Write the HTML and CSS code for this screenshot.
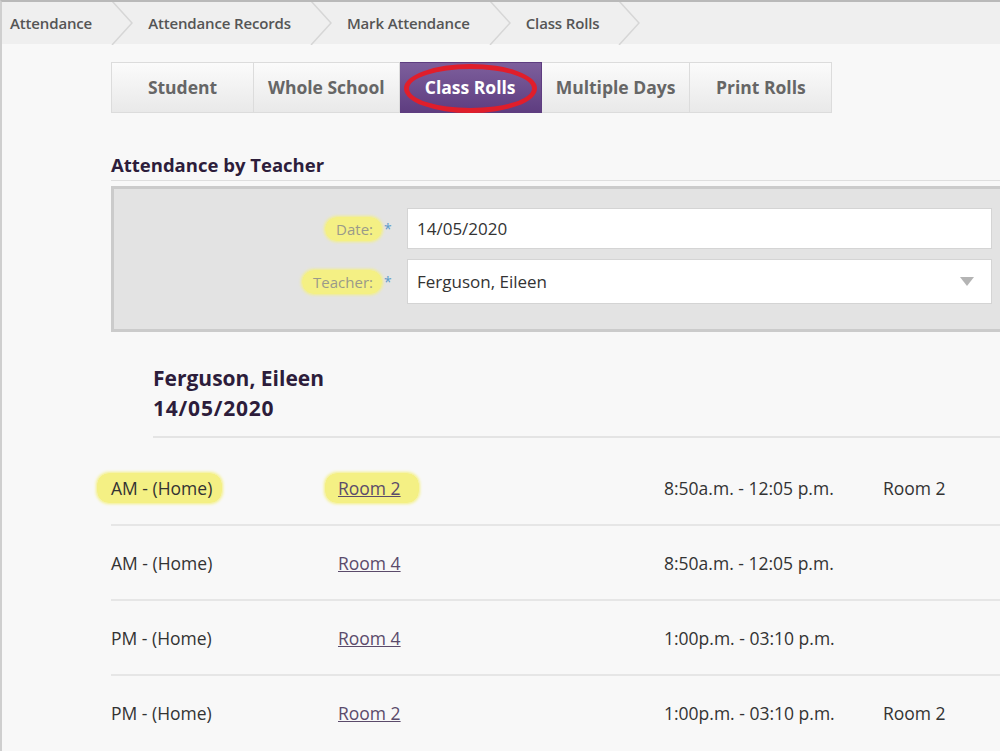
FILE: index.html
```html
<!DOCTYPE html>
<html lang="en">
<head>
    <meta charset="UTF-8">
    <title>Class Rolls</title>
    <link rel="stylesheet" href="styles.css">
</head>
<body>
    <div class="crumbs">
        <span class="crumb first">Attendance</span>
        <svg class="sep" width="22" height="44" viewBox="0 0 22 44"><polyline points="1,0 21,22 1,44" fill="none" stroke="#d6d6d6" stroke-width="1.5"/></svg>
        <span class="crumb">Attendance Records</span>
        <svg class="sep" width="22" height="44" viewBox="0 0 22 44"><polyline points="1,0 21,22 1,44" fill="none" stroke="#d6d6d6" stroke-width="1.5"/></svg>
        <span class="crumb">Mark Attendance</span>
        <svg class="sep" width="22" height="44" viewBox="0 0 22 44"><polyline points="1,0 21,22 1,44" fill="none" stroke="#d6d6d6" stroke-width="1.5"/></svg>
        <span class="crumb">Class Rolls</span>
        <svg class="sep" width="22" height="44" viewBox="0 0 22 44"><polyline points="1,0 21,22 1,44" fill="none" stroke="#d6d6d6" stroke-width="1.5"/></svg>
    </div>

    <div class="content">
        <div class="tabs">
            <div class="tab">Student</div>
            <div class="tab">Whole School</div>
            <div class="tab active">Class Rolls</div>
            <div class="tab">Multiple Days</div>
            <div class="tab">Print Rolls</div>
        </div>

        <h2 class="section-title">Attendance by Teacher</h2>

        <div class="panel">
            <div class="field">
                <label class="label"><span class="hl">Date:</span></label>
                <span class="req">*</span>
                <div class="input">14/05/2020</div>
            </div>
            <div class="field">
                <label class="label"><span class="hl">Teacher:</span></label>
                <span class="req">*</span>
                <div class="input select">Ferguson, Eileen
                    <svg class="caret" width="14" height="9" viewBox="0 0 14 9"><polygon points="0,0 14,0 7,9" fill="#b4b4b4"/></svg>
                </div>
            </div>
        </div>

        <div class="teacher">
            <div>Ferguson, Eileen</div>
            <div class="teacher-date">14/05/2020</div>
        </div>

        <div class="rolls">
            <div class="roll">
                <span><span class="hl hl-row">AM - (Home)</span></span>
                <span><a class="hl hl-link" href="#">Room 2</a></span>
                <span>8:50a.m. - 12:05 p.m.</span>
                <span>Room 2</span>
            </div>
            <div class="roll">
                <span>AM - (Home)</span>
                <span><a href="#">Room 4</a></span>
                <span>8:50a.m. - 12:05 p.m.</span>
                <span></span>
            </div>
            <div class="roll">
                <span>PM - (Home)</span>
                <span><a href="#">Room 4</a></span>
                <span>1:00p.m. - 03:10 p.m.</span>
                <span></span>
            </div>
            <div class="roll last">
                <span>PM - (Home)</span>
                <span><a href="#">Room 2</a></span>
                <span>1:00p.m. - 03:10 p.m.</span>
                <span>Room 2</span>
            </div>
        </div>
    </div>
</body>
</html>
```

FILE: styles.css
```css
body{
    margin: 0;
    padding: 0;
    height: 749px;
    overflow: hidden;
    background-color: #f8f8f8;
    border-top: 2px solid #b9b9b9;
    border-left: 2px solid #cfcfcf;
    font-family: "Open Sans", "Noto Sans", sans-serif;
    color: #333;
}

/* breadcrumb bar */
.crumbs{
    display: flex;
    align-items: center;
    height: 42px;
    background-color: #efefef;
}
.crumb{
    font-size: 15px;
    font-weight: 600;
    color: #555;
    letter-spacing: -0.15px;
    padding: 0 19px 0 15px;
}
.crumb.first{
    padding-left: 8px;
}
.sep{
    display: block;
    flex: none;
}

.content{
    margin-left: 109px;
    width: 900px;
}

/* tabs */
.tabs{
    display: flex;
    margin-top: 18px;
}
.tab{
    position: relative;
    min-width: 113px;
    padding: 0 14px;
    height: 49px;
    line-height: 49px;
    text-align: center;
    font-size: 17.5px;
    font-weight: 700;
    color: #666;
    background: linear-gradient(#fbfbfb, #e9e9e9);
    border: 1px solid #dcdcdc;
    border-left: none;
}
.tab:first-child{
    border-left: 1px solid #dcdcdc;
}
.tab.active{
    color: #fff;
    background: linear-gradient(#7d5f9c, #5e3d80);
    border-color: #5e3d80;
}
.tab.active::after{
    content: "";
    position: absolute;
    top: 1px;
    bottom: -1px;
    left: 4px;
    right: 4px;
    border: 5px solid #e01e2b;
    border-radius: 50%;
}

.section-title{
    margin: 39px 0 0 0;
    padding-bottom: 3px;
    font-size: 18.5px;
    font-weight: 700;
    color: #2d1d3b;
    border-bottom: 1px solid #dedede;
}

/* form panel */
.panel{
    margin-top: 5px;
    padding: 19px 16px 25px 0;
    background-color: #e3e3e3;
    border: 3px solid #cbcbcb;
}
.field{
    display: flex;
    align-items: center;
}
.field + .field{
    margin-top: 10px;
}
.label{
    width: 268px;
    text-align: right;
    font-size: 15px;
    color: #9a9a8a;
}
.req{
    width: 23px;
    padding-left: 2px;
    color: #5a9ac8;
    font-size: 14px;
}
.input{
    flex: 1;
    display: flex;
    align-items: center;
    justify-content: space-between;
    height: 39px;
    padding: 0 17px 0 9px;
    background-color: #fff;
    border: 1px solid #d4d4d4;
    font-size: 17px;
    color: #333;
}
.input.select{
    height: 43px;
}

/* highlighter marks */
.hl{
    background-color: #f4f084;
    box-shadow: 0 0 3px 1px #f4f084;
    border-radius: 12px;
    padding: 2px 9px 2px 11px;
}
.hl-row{
    margin-left: -14px;
    padding: 3px 10px 3px 14px;
}
.hl-link{
    margin-left: -13px;
    padding: 3px 18px 3px 13px;
}

/* teacher heading */
.teacher{
    margin: 31px 0 0 42px;
    padding-bottom: 13px;
    border-bottom: 2px solid #e4e4e4;
    font-size: 21px;
    font-weight: 700;
    line-height: 30px;
    color: #2d1d3b;
}
.teacher-date{
    letter-spacing: 0.8px;
}

/* roll rows */
.rolls{
    margin-top: 13px;
}
.roll{
    display: grid;
    grid-template-columns: 227px 326px 219px 1fr;
    align-items: center;
    height: 73px;
    border-bottom: 2px solid #e6e6e6;
    font-size: 17.5px;
    color: #333;
}
.roll.last{
    border-bottom: none;
}
.roll a{
    color: #5b4b6b;
    text-decoration: underline;
}
```
